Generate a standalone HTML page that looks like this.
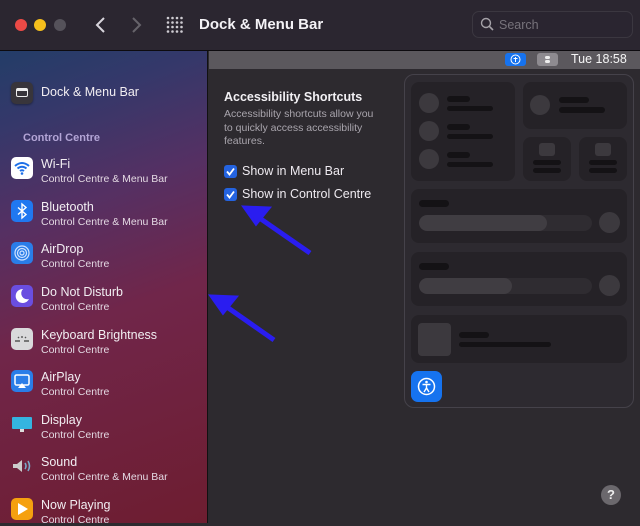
<!DOCTYPE html>
<html><head><meta charset="utf-8"><style>
*{margin:0;padding:0;box-sizing:border-box}
body{width:640px;height:523px;overflow:hidden;background:#2d2a2f;font-family:"Liberation Sans",sans-serif;position:relative;color:#fff}
.hdr{position:absolute;left:0;top:0;width:640px;height:51px;background:#2b2630;border-bottom:1px solid #0d0b0f}
.dot{position:absolute;top:19px;width:12px;height:12px;border-radius:50%}
.side{position:absolute;left:0;top:51px;width:208px;height:472px;background:linear-gradient(160deg,#233d68 0%,#35386a 14%,#553063 33%,#70264a 55%,#6e1d30 100%);border-right:1px solid #111}
.mb{position:absolute;left:209px;top:51px;width:431px;height:18px;background:#5b585d}
.it{position:absolute;left:11px}
.ic{position:absolute;left:0;top:0;width:22px;height:22px;border-radius:5px}
.t{position:absolute;left:30px;top:0px;font-size:12.5px;color:#f2eef2;white-space:nowrap}
.s{position:absolute;left:30px;top:16px;font-size:10.5px;color:#e3d8e2;white-space:nowrap}
.pn{position:absolute;left:404px;top:74px;width:230px;height:334px;border:1px solid #45424a;border-radius:10px;background:#2d2a30}
.bx{position:absolute;background:#252227;border-radius:8px}
.c{position:absolute;background:#3c393e;border-radius:50%}
.l{position:absolute;background:#141215;border-radius:4px}
</style></head><body>
<div class="hdr">
<div class="dot" style="left:15px;background:#ec4a46"></div>
<div class="dot" style="left:34px;background:#f5bf1c"></div>
<div class="dot" style="left:54px;background:#55525a"></div>
<svg style="position:absolute;left:92px;top:15px" width="60" height="20"><path d="M12 3 L5 10 L12 17" stroke="#d8d5dc" stroke-width="2" fill="none"/><path d="M41 3 L48 10 L41 17" stroke="#66636a" stroke-width="2" fill="none"/></svg>
<svg style="position:absolute;left:166px;top:16px" width="18" height="18" fill="#cfccd2"><g id="r"><circle cx="2" cy="2" r="1.3"/><circle cx="6.5" cy="2" r="1.3"/><circle cx="11" cy="2" r="1.3"/><circle cx="15.5" cy="2" r="1.3"/></g><use href="#r" y="4.5"/><use href="#r" y="9"/><use href="#r" y="13.5"/></svg>
<div style="position:absolute;left:199px;top:16px;font-size:15px;font-weight:bold;color:#f4f2f6">Dock &amp; Menu Bar</div>
<div style="position:absolute;left:472px;top:11px;width:161px;height:27px;border:1px solid #3b3740;border-radius:7px;background:#2a2530"></div>
<svg style="position:absolute;left:480px;top:17px" width="14" height="14"><circle cx="6" cy="6" r="4.5" stroke="#a5a2a8" stroke-width="1.4" fill="none"/><path d="M9.3 9.3 L13 13" stroke="#a5a2a8" stroke-width="1.6"/></svg>
<div style="position:absolute;left:499px;top:18px;font-size:12.5px;color:#77737b">Search</div>
</div>
<div class="side">
<div class="it" style="top:31px"><div class="ic" style="background:#38353b;box-shadow:0 1px 2px #0006"><div style="position:absolute;left:5px;top:6px;width:12px;height:9px;border:1.5px solid #eee;border-radius:2px;border-top-width:3px"></div></div><div class="t" style="top:3px">Dock &amp; Menu Bar</div></div>
<div style="position:absolute;left:23px;top:81px;font-size:11px;font-weight:bold;color:#b3a5d6">Control Centre</div>
<div class="it" style="top:106px"><div class="ic" style="background:#fff"><svg width="22" height="22"><path d="M4 9 Q11 3 18 9 M6.5 11.5 Q11 8 15.5 11.5 M9 14 Q11 12.5 13 14" stroke="#1c6fe8" stroke-width="2" fill="none"/><circle cx="11" cy="16.5" r="1.3" fill="#1c6fe8"/></svg></div><div class="t">Wi-Fi</div><div class="s">Control Centre &amp; Menu Bar</div></div>
<div class="it" style="top:149px"><div class="ic" style="background:#2078f0"><svg width="22" height="22"><path d="M7 7.5 L15 14.5 L11 18 L11 4 L15 7.5 L7 14.5" stroke="#fff" stroke-width="1.4" fill="none"/></svg></div><div class="t">Bluetooth</div><div class="s">Control Centre &amp; Menu Bar</div></div>
<div class="it" style="top:191px"><div class="ic" style="background:#2a7de8"><svg width="22" height="22" fill="none" stroke="#cfe3ff" stroke-width="1.2"><circle cx="11" cy="11" r="2"/><circle cx="11" cy="11" r="4.5"/><circle cx="11" cy="11" r="7"/></svg></div><div class="t">AirDrop</div><div class="s">Control Centre</div></div>
<div class="it" style="top:234px"><div class="ic" style="background:#6a4ee0"><svg width="22" height="22"><path d="M12 4 A7 7 0 1 0 18 14 A6 6 0 0 1 12 4Z" fill="#fff"/></svg></div><div class="t">Do Not Disturb</div><div class="s">Control Centre</div></div>
<div class="it" style="top:277px"><div class="ic" style="background:#d9d9db"><svg width="22" height="22" stroke="#555" stroke-width="1.4"><path d="M4 13 H9 M13 13 H18 M11 8 V10 M7 9 L8 10 M15 9 L14 10"/></svg></div><div class="t">Keyboard Brightness</div><div class="s">Control Centre</div></div>
<div class="it" style="top:319px"><div class="ic" style="background:#2a7de8"><svg width="22" height="22"><rect x="4" y="5" width="14" height="10" rx="1.5" stroke="#fff" stroke-width="1.5" fill="none"/><path d="M7 18 L11 13 L15 18Z" fill="#fff"/></svg></div><div class="t">AirPlay</div><div class="s">Control Centre</div></div>
<div class="it" style="top:362px"><div class="ic"><svg width="22" height="22"><rect x="1" y="4" width="20" height="12" rx="1" fill="#34b4e0"/><rect x="9" y="16" width="4" height="3" fill="#ddd"/></svg></div><div class="t">Display</div><div class="s">Control Centre</div></div>
<div class="it" style="top:404px"><div class="ic"><svg width="22" height="22"><path d="M2 9 H6 L11 5 V17 L6 13 H2Z" fill="#ccc"/><path d="M14 8 Q16 11 14 14 M17 6 Q20 11 17 16" stroke="#7aa8c8" stroke-width="1.6" fill="none"/></svg></div><div class="t">Sound</div><div class="s">Control Centre &amp; Menu Bar</div></div>
<div class="it" style="top:447px"><div class="ic" style="background:#f5a00f"><svg width="22" height="22"><path d="M7 5 L17 11 L7 17Z" fill="#fff"/></svg></div><div class="t">Now Playing</div><div class="s">Control Centre</div></div>
</div>
<div class="mb">
<div style="position:absolute;left:296px;top:2px;width:21px;height:13px;background:#1673ef;border-radius:3px"><svg width="21" height="13"><circle cx="10.5" cy="6.5" r="4.5" stroke="#fff" stroke-width="1" fill="none"/><path d="M10.5 4 V9 M8.5 5.5 H12.5" stroke="#fff" stroke-width="1"/></svg></div>
<div style="position:absolute;left:328px;top:2px;width:21px;height:13px;background:#8e8b90;border-radius:3px"><div style="position:absolute;left:8px;top:3px;width:5px;height:3px;background:#eee;border-radius:2px"></div><div style="position:absolute;left:8px;top:7px;width:5px;height:3px;background:#eee;border-radius:2px"></div></div>
<div style="position:absolute;left:362px;top:1px;font-size:12.5px;color:#f5f5f5">Tue 18:58</div>
</div>
<div style="position:absolute;left:224px;top:90px;font-size:12.5px;font-weight:bold;color:#f2f0f4">Accessibility Shortcuts</div>
<div style="position:absolute;left:224px;top:108px;font-size:10.5px;line-height:13.5px;color:#a9a5ad;width:160px">Accessibility shortcuts allow you to quickly access accessibility features.</div>
<div style="position:absolute;left:224px;top:165px;width:13px;height:13px;background:#2463e0;border-radius:3px"><svg width="13" height="13"><path d="M3 6.5 L5.5 9.5 L10 3.5" stroke="#fff" stroke-width="1.8" fill="none"/></svg></div>
<div style="position:absolute;left:242px;top:164px;font-size:12.5px;color:#eeeaf0">Show in Menu Bar</div>
<div style="position:absolute;left:224px;top:188px;width:13px;height:13px;background:#2463e0;border-radius:3px"><svg width="13" height="13"><path d="M3 6.5 L5.5 9.5 L10 3.5" stroke="#fff" stroke-width="1.8" fill="none"/></svg></div>
<div style="position:absolute;left:242px;top:187px;font-size:12.5px;color:#eeeaf0">Show in Control Centre</div>
<div class="pn">
<div class="bx" style="left:6px;top:7px;width:104px;height:99px"><div class="c" style="left:8px;top:11px;width:20px;height:20px"></div><div class="c" style="left:8px;top:39px;width:20px;height:20px"></div><div class="c" style="left:8px;top:67px;width:20px;height:20px"></div>
<div class="l" style="left:36px;top:14px;width:23px;height:6px"></div><div class="l" style="left:36px;top:24px;width:46px;height:5px"></div>
<div class="l" style="left:36px;top:42px;width:23px;height:6px"></div><div class="l" style="left:36px;top:52px;width:46px;height:5px"></div>
<div class="l" style="left:36px;top:70px;width:23px;height:6px"></div><div class="l" style="left:36px;top:80px;width:46px;height:5px"></div></div>
<div class="bx" style="left:118px;top:7px;width:104px;height:47px"><div class="c" style="left:7px;top:13px;width:20px;height:20px"></div><div class="l" style="left:36px;top:15px;width:30px;height:6px"></div><div class="l" style="left:36px;top:25px;width:46px;height:6px"></div></div>
<div class="bx" style="left:118px;top:62px;width:48px;height:44px"><div style="position:absolute;left:16px;top:6px;width:16px;height:13px;background:#3c393e;border-radius:3px"></div><div class="l" style="left:10px;top:23px;width:28px;height:5px"></div><div class="l" style="left:10px;top:31px;width:28px;height:5px"></div></div>
<div class="bx" style="left:174px;top:62px;width:48px;height:44px"><div style="position:absolute;left:16px;top:6px;width:16px;height:13px;background:#3c393e;border-radius:3px"></div><div class="l" style="left:10px;top:23px;width:28px;height:5px"></div><div class="l" style="left:10px;top:31px;width:28px;height:5px"></div></div>
<div class="bx" style="left:6px;top:114px;width:216px;height:54px"><div class="l" style="left:8px;top:11px;width:30px;height:7px"></div><div style="position:absolute;left:8px;top:26px;width:173px;height:16px;background:#2f2c31;border-radius:8px;overflow:hidden"><div style="width:128px;height:16px;background:#403d42;border-radius:8px"></div></div><div class="c" style="left:188px;top:23px;width:21px;height:21px"></div></div>
<div class="bx" style="left:6px;top:177px;width:216px;height:54px"><div class="l" style="left:8px;top:11px;width:30px;height:7px"></div><div style="position:absolute;left:8px;top:26px;width:173px;height:16px;background:#2f2c31;border-radius:8px;overflow:hidden"><div style="width:93px;height:16px;background:#403d42;border-radius:8px"></div></div><div class="c" style="left:188px;top:23px;width:21px;height:21px"></div></div>
<div class="bx" style="left:6px;top:240px;width:216px;height:48px"><div style="position:absolute;left:7px;top:8px;width:33px;height:33px;background:#3c393e;border-radius:4px"></div><div class="l" style="left:48px;top:17px;width:30px;height:6px"></div><div class="l" style="left:48px;top:27px;width:92px;height:5px"></div></div>
<div style="position:absolute;left:6px;top:296px;width:31px;height:31px;background:#1673ef;border-radius:7px"><svg width="31" height="31"><circle cx="15.5" cy="15.5" r="8" stroke="#fff" stroke-width="1.5" fill="none"/><circle cx="15.5" cy="11" r="1.3" fill="#fff"/><path d="M11.5 13.5 H19.5 M15.5 13.5 V17 L13 21 M15.5 17 L18 21" stroke="#fff" stroke-width="1.4" fill="none"/></svg></div>
</div>
<div style="position:absolute;left:601px;top:485px;width:20px;height:20px;border-radius:50%;background:#6b686d;color:#eee;font-size:13px;font-weight:bold;text-align:center;line-height:20px">?</div>
<svg style="position:absolute;left:0;top:0" width="640" height="523"><path d="M310 253 L258 217" stroke="#2a1df0" stroke-width="5"/><path d="M244 207 L269 208 L256 224Z" fill="#2a1df0" stroke="#2a1df0" stroke-width="3"/><path d="M274 340 L224 305" stroke="#2a1df0" stroke-width="5"/><path d="M211 296 L236 297 L223 313Z" fill="#2a1df0" stroke="#2a1df0" stroke-width="3"/></svg>
</body></html>
